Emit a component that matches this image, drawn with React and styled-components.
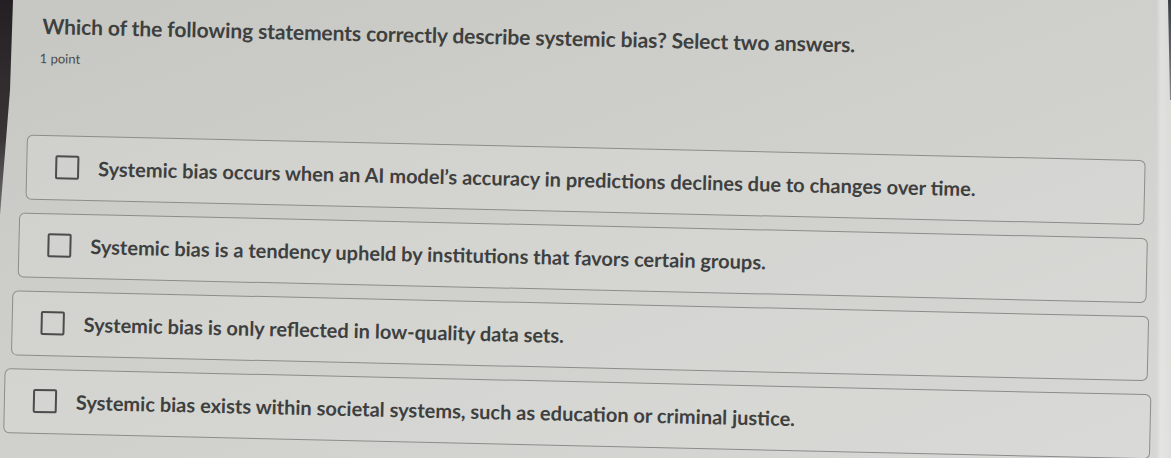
import React from "react";
import styled, { createGlobalStyle } from "styled-components";

const GlobalStyle = createGlobalStyle`
  html, body {
    margin: 0;
    padding: 0;
    background: #cfd0cc;
  }
  body {
    font-family: "Lato", "Noto Sans", sans-serif;
    overflow: hidden;
  }
`;

const Screen = styled.div`
  position: relative;
  width: 1171px;
  height: 458px;
  overflow: hidden;
  background:
    linear-gradient(90deg, rgba(255,255,255,0) 0, rgba(255,255,255,0) 1156px, rgba(255,255,255,0.35) 1161px, rgba(255,255,255,0.2) 1171px),
    linear-gradient(160deg, #c6c7c2 0%, #cdcec9 35%, #d3d4d0 70%, #d7d8d5 100%);
`;

const BezelLeft = styled.div`
  position: absolute;
  left: 0;
  top: 0;
  width: 16px;
  height: 230px;
  background: linear-gradient(180deg, #241f22 0%, #3a3437 60%, #7d7b7b 100%);
  clip-path: polygon(0 0, 13px 0, 10px 90px, 0 215px);
`;

const BezelRight = styled.div`
  position: absolute;
  right: 0;
  top: 0;
  width: 8px;
  height: 110px;
  background: linear-gradient(180deg, #3a3d44 0%, #8c8f95 100%);
  clip-path: polygon(5px 0, 8px 0, 8px 100px, 7px 100px);
`;

const Sheet = styled.div`
  transform: rotate(1.3deg);
  transform-origin: 0 0;
  padding-top: 12px;
`;

const Question = styled.h1`
  margin: 0 0 0 43px;
  font-size: 21px;
  line-height: 1.2;
  font-weight: 700;
  color: #3e403f;
  letter-spacing: -0.1px;
`;

const Points = styled.div`
  margin: 13px 0 0 41px;
  font-size: 13px;
  line-height: 1.2;
  font-weight: 400;
  color: #4a4b4a;
`;

const OptionList = styled.div`
  display: flex;
  flex-direction: column;
  gap: 13px;
  margin-top: 68px;
`;

const Option = styled.label`
  display: flex;
  align-items: center;
  gap: 19px;
  height: 65px;
  margin-left: ${(p) => p.$inset}px;
  margin-right: ${(p) => p.$insetRight}px;
  padding-left: 28px;
  border: 1.5px solid #8c8d8a;
  border-radius: 6px;
  background: rgba(220, 221, 218, 0.35);
  box-sizing: border-box;
`;

const Box = styled.span`
  flex: none;
  width: 20px;
  height: 20px;
  border: 2px solid #4b4c4b;
  border-radius: 2px;
`;

const Text = styled.span`
  font-size: 20px;
  font-weight: 700;
  color: #3e403f;
`;

const options = [
  { inset: 30, right: 22, text: "Systemic bias occurs when an AI model\u2019s accuracy in predictions declines due to changes over time." },
  { inset: 24, right: 18, text: "Systemic bias is a tendency upheld by institutions that favors certain groups." },
  { inset: 19, right: 15, text: "Systemic bias is only reflected in low-quality data sets." },
  { inset: 13, right: 11, text: "Systemic bias exists within societal systems, such as education or criminal justice." },
];

export default function App() {
  return (
    <Screen>
      <GlobalStyle />
      <Sheet>
        <Question>
          Which of the following statements correctly describe systemic bias? Select two answers.
        </Question>
        <Points>1 point</Points>
        <OptionList>
          {options.map((o) => (
            <Option key={o.text} $inset={o.inset} $insetRight={o.right}>
              <Box />
              <Text>{o.text}</Text>
            </Option>
          ))}
        </OptionList>
      </Sheet>
      <BezelLeft />
      <BezelRight />
    </Screen>
  );
}
